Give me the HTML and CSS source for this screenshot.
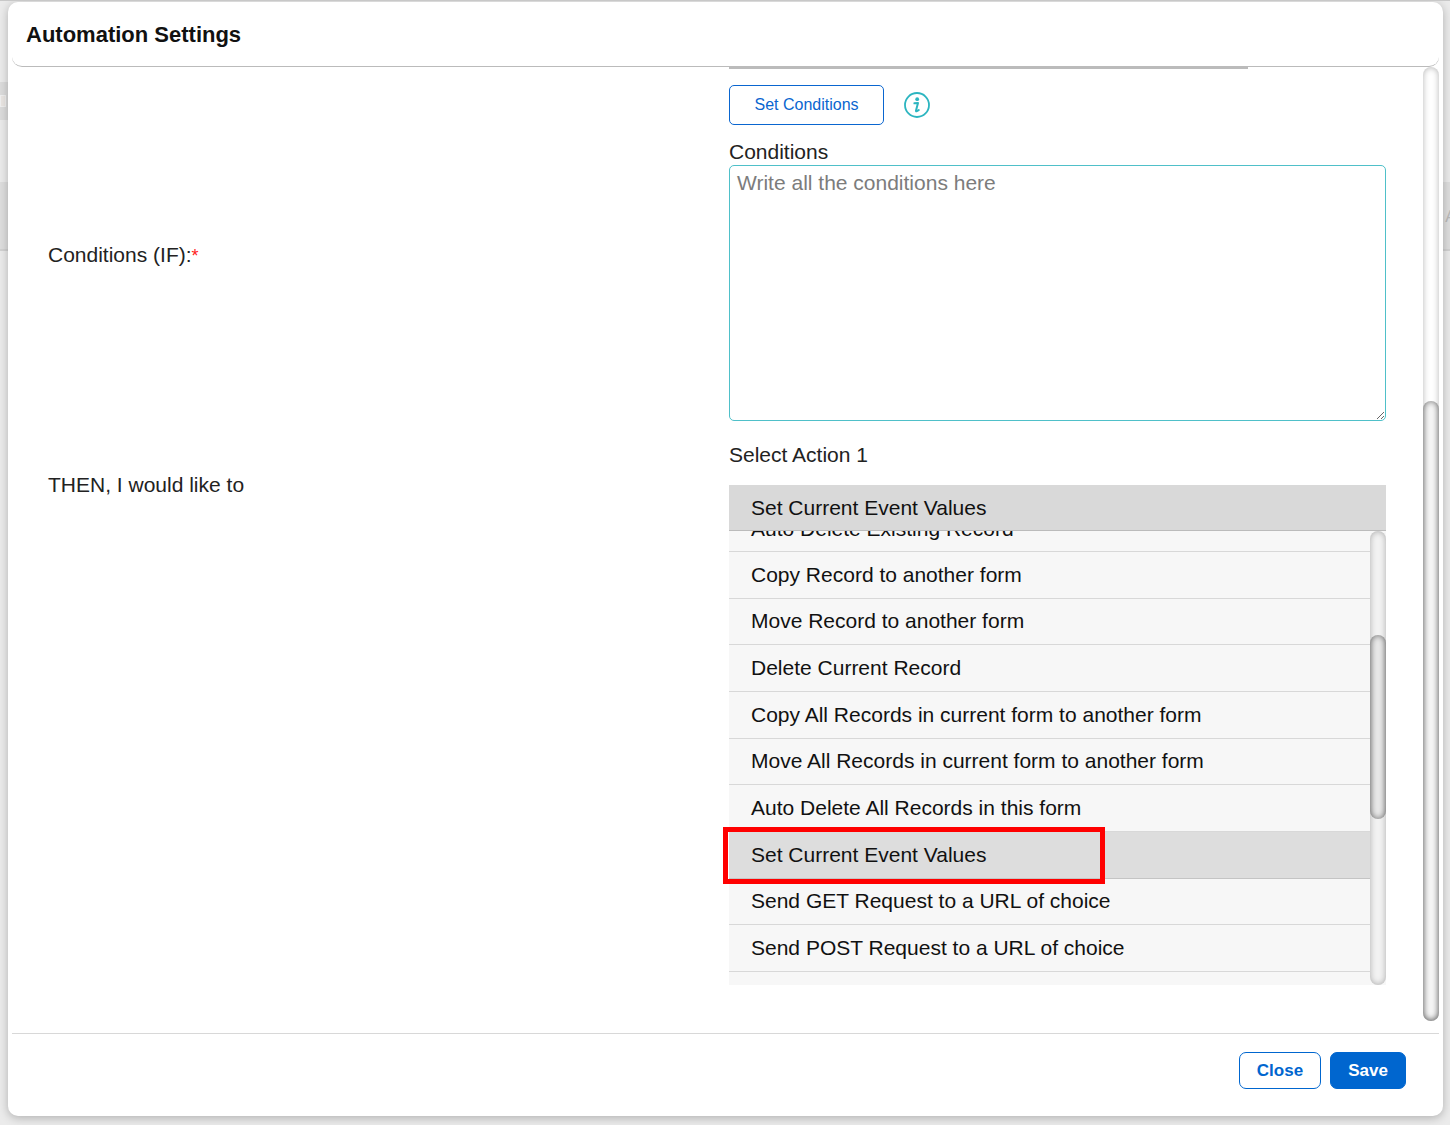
FILE: index.html
```
<!DOCTYPE html>
<html lang="en">
	<head>
		<meta charset="utf-8" />
		<meta name="viewport" content="width=device-width" />
		<title>Automation Settings</title>
		<link rel="stylesheet" href="styles.css">
	</head>
	<body>
		<!-- dimmed page behind the dialog -->
		<div class="backdrop" aria-hidden="true">
			<div class="toolbar"><span class="tool"></span></div>
			<div class="table-head">A</div>
		</div>

		<div class="modal" role="dialog" aria-labelledby="modal-title">
			<header class="modal-header">
				<h1 id="modal-title">Automation Settings</h1>
			</header>

			<div class="modal-body">
				<form class="settings" id="settings">
					<label class="row-label centered" for="conditions">Conditions (IF):<span class="required">*</span></label>
					<div class="field conditions">
						<div class="field-above"></div>
						<div class="condition-tools">
							<button type="button" class="btn-set">Set Conditions</button>
							<svg class="info" viewBox="0 0 26 26" role="img" aria-label="Info">
								<circle cx="13" cy="13" r="12" fill="none" stroke="currentColor" stroke-width="1.8"/>
								<circle cx="13.2" cy="7.2" r="1.9" fill="currentColor"/>
								<path d="M10.4 11.3 L14 10.9 L12 18.4 Q11.7 20.4 14.8 18" fill="none" stroke="currentColor" stroke-width="2" stroke-linejoin="round" stroke-linecap="round"/>
							</svg>
						</div>
						<label class="field-label" for="conditions">Conditions</label>
						<textarea id="conditions" placeholder="Write all the conditions here"></textarea>
					</div>

					<div class="row-label then">THEN, I would like to</div>
					<div class="field">
						<label class="action-label" for="action">Select Action 1</label>
						<select id="action" class="action-select">
							<option>Set Current Event Values</option>
						</select>
						<div class="dropdown">
							<div class="options">
								<button type="button" class="cut-top">Auto Delete Existing Record</button>
								<button type="button">Copy Record to another form</button>
								<button type="button">Move Record to another form</button>
								<button type="button">Delete Current Record</button>
								<button type="button">Copy All Records in current form to another form</button>
								<button type="button">Move All Records in current form to another form</button>
								<button type="button">Auto Delete All Records in this form</button>
								<button type="button" class="selected">Set Current Event Values<span class="highlight"></span></button>
								<button type="button">Send GET Request to a URL of choice</button>
								<button type="button">Send POST Request to a URL of choice</button>
							</div>
							<div class="scrollbar inner"><div class="thumb"></div></div>
						</div>
					</div>
				</form>
				<div class="scrollbar outer"><div class="thumb"></div></div>
			</div>

			<footer class="modal-footer">
				<button type="button" class="btn">Close</button>
				<button type="submit" form="settings" class="btn btn-primary">Save</button>
			</footer>
		</div>
	</body>
</html>
```
FILE: styles.css
```
* {
	box-sizing: border-box;
}
body {
	margin: 0;
	padding: 1px 7px 9px 8px;
	min-height: 100vh;
	display: flex;
	background: #ebebeb;
	border-top: 1px solid #c8c8c8;
	font-family: "Liberation Sans", Arial, sans-serif;
	font-size: 21px;
	line-height: 24px;
	color: #222;
}
button, textarea, select {
	font: inherit;
	margin: 0;
}

/* page behind */
.backdrop {
	position: absolute;
	top: 0;
	left: 0;
	right: 0;
	padding-top: 82px;
	overflow: hidden;
}
.toolbar {
	width: 50%;
	height: 38px;
	padding-top: 13px;
	background: #dcdcdc;
}
.tool {
	display: block;
	width: 6px;
	height: 12px;
	background: #eae6e3;
	border: 1px solid #f0f0f0;
}
.table-head {
	height: 69px;
	margin-top: 62px;
	margin-right: -6px;
	background: #dedede;
	border-bottom: 2px solid #d2d2d2;
	color: #b8b8b8;
	font-size: 16px;
	line-height: 70px;
	text-align: right;
}

.modal {
	position: relative;
	flex: 1;
	display: flex;
	flex-direction: column;
	padding: 0 4px;
	background: #fff;
	border-radius: 10px;
	box-shadow: 0 2px 10px rgba(0, 0, 0, .25);
}
.modal-header {
	height: 65px;
	padding: 2px 14px 0;
	display: flex;
	align-items: center;
	border-bottom: 1px solid #bbb;
	border-radius: 10px;
}
h1 {
	margin: 0;
	font-size: 22px;
	line-height: 24px;
	color: #111;
}

.modal-body {
	flex: 1;
	display: flex;
	padding-bottom: 12px;
}
.settings {
	flex: 1;
	display: grid;
	grid-template-columns: 681fr 657fr;
	align-content: start;
	padding: 0 37px 0 36px;
}
.row-label.centered {
	align-self: center;
}
.required {
	color: #f22;
	font-size: 18px;
}
.then {
	padding-top: 30px;
}
.field {
	display: flex;
	flex-direction: column;
}
.conditions {
	padding-bottom: 22px;
}
.field-above {
	width: 79%;
	height: 2px;
	background: #bbb;
}
.condition-tools {
	display: flex;
	align-items: center;
	gap: 20px;
	margin: 16px 0 15px;
}
.field-label {
	margin-bottom: 1px;
}
.btn-set {
	width: 155px;
	height: 40px;
	background: #fff;
	border: 1px solid #0a66d0;
	border-radius: 5px;
	color: #0a66d0;
	font-size: 16px;
}
.info {
	width: 26px;
	height: 26px;
	color: #2cb5c0;
}
textarea {
	width: 100%;
	height: 256px;
	padding: 5px 7px;
	border: 1px solid #4fc0c9;
	border-radius: 5px;
	resize: both;
}
textarea::placeholder {
	color: #7c7c7c;
}

.action-label {
	margin-bottom: 18px;
}
.action-select {
	width: 100%;
	height: 46px;
	padding: 0 22px;
	appearance: none;
	background: #d9d9d9;
	border: 0;
	border-bottom: 1px solid #bbb;
	border-radius: 0;
	color: #111;
}
.dropdown {
	display: flex;
	height: 454px;
	background: #f7f7f7;
}
.options {
	flex: 1;
	display: grid;
	grid-template-rows: 21px repeat(9, 1fr);
	padding-bottom: 13px;
}
.options button {
	position: relative;
	min-height: 0;
	padding: 0 22px;
	background: none;
	border: 0;
	border-bottom: 1px solid #d8d8d8;
	color: #111;
	text-align: left;
}
/* scrolled half out of the list */
.options .cut-top {
	display: flex;
	align-items: flex-end;
	padding-bottom: 10px;
	overflow: hidden;
}
.options .selected {
	background: #ddd;
	border-color: #c4c4c4;
}
/* red marker drawn over the selected option */
.highlight {
	position: absolute;
	top: -5px;
	bottom: -6px;
	left: -6px;
	width: 382px;
	border: 5px solid #f00;
}

.scrollbar {
	display: flex;
	flex-direction: column;
	width: 16px;
	border-radius: 8px;
	box-shadow: inset 0 0 6px rgba(0, 0, 0, .3);
}
.thumb {
	border-radius: 8px;
	background: rgba(0, 0, 0, .04);
	box-shadow: inset 0 0 6px rgba(0, 0, 0, .5);
}
.inner {
	background: #f2f2f2;
}
.inner .thumb {
	height: 184px;
	margin-top: 104px;
}
.outer .thumb {
	flex: 1;
	margin-top: 334px;
}

.modal-footer {
	display: flex;
	justify-content: flex-end;
	gap: 9px;
	padding: 18px 33px 27px;
	border-top: 1px solid #d8d8d8;
}
.btn {
	width: 82px;
	height: 37px;
	padding: 0;
	background: #fff;
	border: 1px solid #0066cf;
	border-radius: 7px;
	color: #0066cf;
	font-size: 17px;
	font-weight: bold;
}
.btn-primary {
	width: 76px;
	background: #0066cf;
	color: #fff;
}
```
